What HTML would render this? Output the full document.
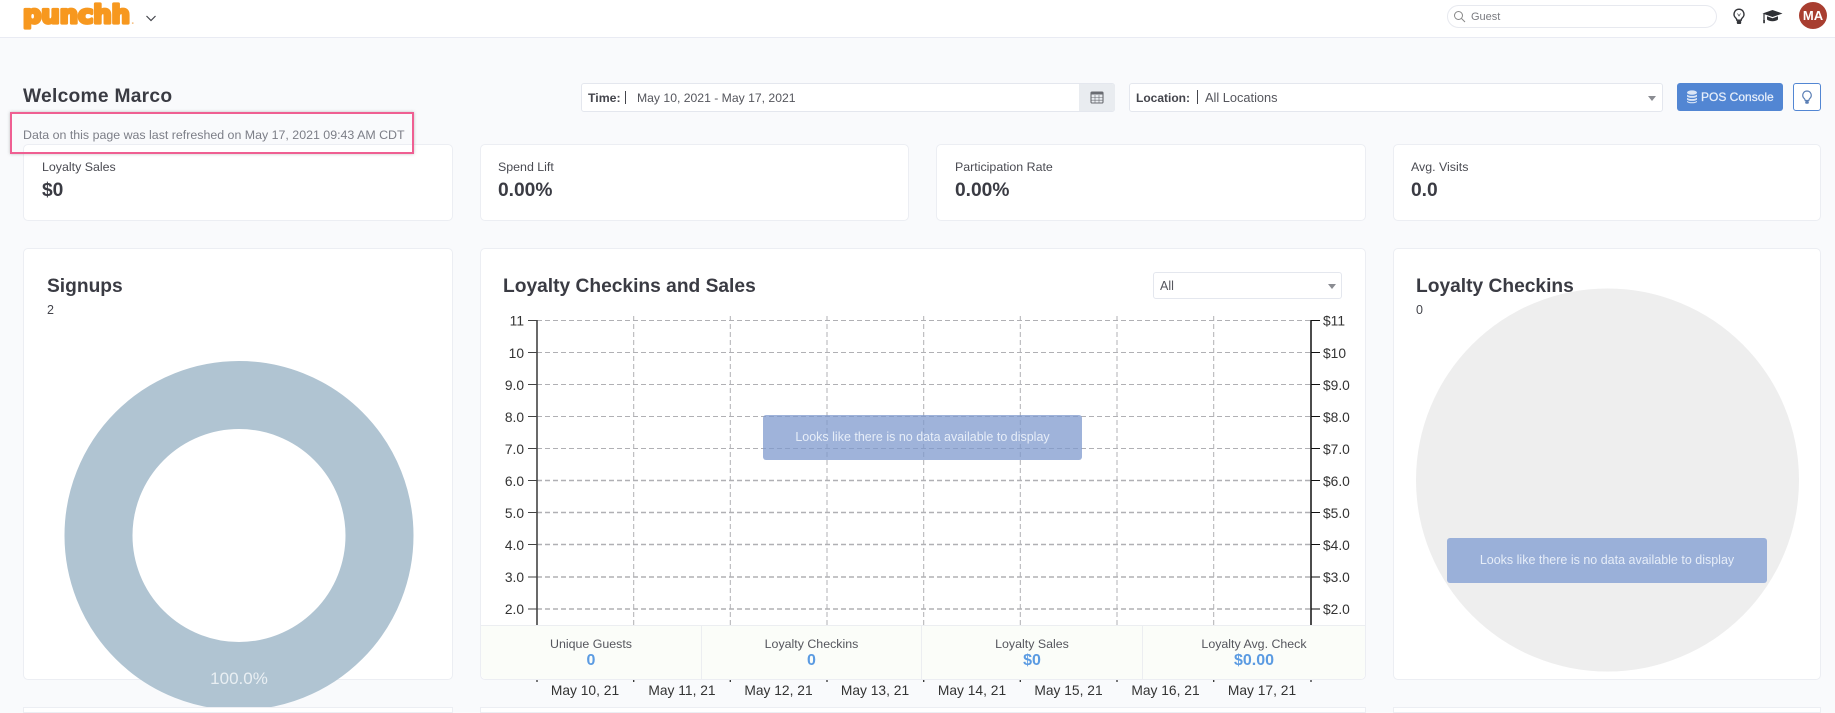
<!DOCTYPE html>
<html lang="en">
<head>
<meta charset="utf-8">
<title>Punchh Dashboard</title>
<style>
*{box-sizing:border-box}
html,body{margin:0;padding:0}
body{width:1835px;height:708px;overflow:hidden;background:#f9fafc;position:relative;font-family:"Liberation Sans",sans-serif;color:#3b3c44}
.a{position:absolute;white-space:nowrap}
.card{position:absolute;background:#fff;border:1px solid #eceef3;border-radius:5px}
.lbl{font-size:12.4px;color:#4a4b52;line-height:16px}
.val{font-size:19.2px;font-weight:700;color:#3a3b43;line-height:24px}
.title{font-size:19.2px;font-weight:700;color:#3a3b43;line-height:24px}
.box{position:absolute;background:#fff;border:1px solid #e4e7ee;border-radius:3px}
.tri{position:absolute;width:0;height:0;border-left:4px solid transparent;border-right:4px solid transparent;border-top:5px solid #8a8c92}
.nodata{position:absolute;border-radius:3px;color:#e6edf8;font-size:12.5px;text-align:center}
.cell{position:absolute;top:0;height:54px;text-align:center}
.cell .t{position:absolute;left:0;right:0;top:10px;font-size:12.4px;line-height:16px;color:#55565d}
.cell .v{position:absolute;left:0;right:0;top:25px;font-size:16px;line-height:20px;font-weight:700;color:#5b9be2}
</style>
</head>
<body>
<!-- header -->
<div class="a" style="left:0;top:0;width:1835px;height:38px;background:#fff;border-bottom:1px solid #e9ebf3"></div>
<svg class="a" style="left:18px;top:0" width="125" height="34" viewBox="0 0 125 34">
  <text x="5" y="23" font-family="DejaVu Sans" font-weight="700" font-size="25" fill="#f7981f" stroke="#f7981f" stroke-width="3.200" stroke-linejoin="round" textLength="107" lengthAdjust="spacingAndGlyphs">punchh</text>
  <text x="113" y="24" font-family="DejaVu Sans" font-weight="700" font-size="9" fill="#f5c48c">.</text>
</svg>
<svg class="a" style="left:145px;top:14px" width="12" height="9" viewBox="0 0 12 9"><path d="M1.500 2 L6 6.500 L10.500 2" fill="none" stroke="#44464c" stroke-width="1.200"/></svg>

<div class="a" style="left:1447px;top:5px;width:270px;height:23px;border:1px solid #e7e9ef;border-radius:12px;background:#fff"></div>
<svg class="a" style="left:1453px;top:10px" width="13" height="13" viewBox="0 0 13 13"><circle cx="5.500" cy="5.500" r="4" fill="none" stroke="#888" stroke-width="1"/><path d="M8.500 8.500 L12 12" stroke="#888" stroke-width="1"/></svg>
<div class="a" style="left:1471px;top:10px;font-size:11px;line-height:14px;color:#7a7b80">Guest</div>
<svg class="a" style="left:1732px;top:8px" width="14" height="17" viewBox="0 0 14 17"><path d="M7 1.200a5 5 0 0 0-3.200 8.800c.7.7 1 1.400 1 2.200h4.400c0-.8.300-1.500 1-2.200A5 5 0 0 0 7 1.200z" fill="#fff" stroke="#33353a" stroke-width="1.400"/><rect x="4.800" y="12.600" width="4.400" height="3.400" rx="1" fill="#33353a"/><path d="M5.500 5.500 L7 8 L8.500 5.500" fill="none" stroke="#33353a" stroke-width=".7"/></svg>
<svg class="a" style="left:1762px;top:9px" width="21" height="15" viewBox="0 0 21 15"><path d="M10.500 1 L20.500 4.500 L10.500 8 L.5 4.500z" fill="#2e3035"/><path d="M5 7.300 L10.500 9.300 L16 7.300 V10.500 C14 12.800 7 12.800 5 10.500z" fill="#2e3035"/><path d="M2 5 V11.500" stroke="#2e3035" stroke-width="1.200"/><rect x="1.200" y="11" width="1.700" height="3.200" fill="#2e3035"/></svg>
<div class="a" style="left:1799px;top:2px;width:28px;height:27px;border-radius:50%;background:#a83e30;color:#fff;font-weight:700;font-size:13px;line-height:27px;text-align:center">MA</div>

<!-- page heading -->
<div class="a" style="left:23px;top:85px;font-size:19.200px;font-weight:700;line-height:24px;color:#3a3b43;letter-spacing:.28px">Welcome Marco</div>

<!-- stat cards -->
<div class="card" style="left:23px;top:144px;width:430px;height:77px"></div>
<div class="card" style="left:480px;top:144px;width:429px;height:77px"></div>
<div class="card" style="left:936px;top:144px;width:430px;height:77px"></div>
<div class="card" style="left:1393px;top:144px;width:428px;height:77px"></div>
<div class="a lbl" style="left:42px;top:159px">Loyalty Sales</div>
<div class="a val" style="left:42px;top:179px">$0</div>
<div class="a lbl" style="left:498px;top:159px">Spend Lift</div>
<div class="a val" style="left:498px;top:179px">0.00%</div>
<div class="a lbl" style="left:955px;top:159px">Participation Rate</div>
<div class="a val" style="left:955px;top:179px">0.00%</div>
<div class="a lbl" style="left:1411px;top:159px">Avg. Visits</div>
<div class="a val" style="left:1411px;top:179px">0.0</div>

<!-- highlighted refresh box -->
<div class="a" style="left:10px;top:112px;width:404px;height:42px;border:2px solid #ef5f92;box-shadow:0 0 3px rgba(120,120,120,.45)"></div>
<div class="a" style="left:23px;top:127px;font-size:12.400px;line-height:16px;color:#7c7e87">Data on this page was last refreshed on May 17, 2021 09:43 AM CDT</div>

<!-- time -->
<div class="box" style="left:581px;top:83px;width:534px;height:29px"></div>
<div class="a" style="left:1079px;top:84px;width:36px;height:27px;background:#e9ecf0;border-radius:0 3px 3px 0"></div>
<svg class="a" style="left:1090px;top:90px" width="14" height="14" viewBox="0 0 14 14"><rect x="1" y="2" width="12" height="11" rx="1" fill="none" stroke="#6a6c72" stroke-width="1.100"/><rect x="1" y="2" width="12" height="2.500" fill="#6a6c72"/><path d="M1 7.500H13M1 10.200H13M5 5V13M9 5V13" stroke="#6a6c72" stroke-width=".6"/></svg>
<div class="a" style="left:588px;top:90px;font-size:12.300px;font-weight:700;line-height:16px;color:#44454c">Time:</div>
<div class="a" style="left:625px;top:91px;width:1px;height:13px;background:#44454c"></div>
<div class="a" style="left:637px;top:90px;font-size:12.200px;line-height:16px;color:#55565d">May 10, 2021 - May 17, 2021</div>

<!-- location -->
<div class="box" style="left:1129px;top:83px;width:534px;height:29px"></div>
<div class="a" style="left:1136px;top:90px;font-size:12px;font-weight:700;line-height:16px;color:#44454c">Location:</div>
<div class="a" style="left:1197px;top:90px;width:1px;height:14px;background:#44454c"></div>
<div class="a" style="left:1205px;top:90px;font-size:12.800px;line-height:16px;color:#55565d">All Locations</div>
<div class="tri" style="left:1648px;top:96px"></div>

<!-- POS -->
<div class="a" style="left:1677px;top:83px;width:106px;height:28px;background:#5286d3;border-radius:3px"></div>
<svg class="a" style="left:1686px;top:90px" width="12" height="14" viewBox="0 0 12 14" fill="#dbe6f6"><ellipse cx="6" cy="2.600" rx="5" ry="2.200"/><path d="M1 4.600c1.500 1.700 8.500 1.700 10 0V6.500C9.500 8.200 2.500 8.200 1 6.500z"/><path d="M1 7.800c1.500 1.700 8.500 1.700 10 0V9.600C9.500 11.300 2.500 11.300 1 9.600z"/><path d="M1 10.900c1.500 1.700 8.500 1.700 10 0V12c-1.500 1.700-8.500 1.700-10 0z"/></svg>
<div class="a" style="left:1701px;top:89px;font-size:12px;line-height:16px;color:#e6eefa;-webkit-text-stroke:.25px #e6eefa">POS Console</div>
<div class="a" style="left:1793px;top:83px;width:28px;height:28px;border:1px solid #5286d3;border-radius:3px;background:#fff"></div>
<svg class="a" style="left:1801px;top:90px" width="12" height="15" viewBox="0 0 12 15"><path d="M6 1a4.300 4.300 0 0 0-2.700 7.600c.6.6.9 1.200.9 1.900h3.600c0-.7.300-1.300.9-1.900A4.300 4.300 0 0 0 6 1z" fill="#fff" stroke="#5b7fb5" stroke-width="1.200"/><rect x="4.200" y="11" width="3.600" height="2.800" rx="1" fill="#5b7fb5"/></svg>

<!-- big cards -->
<div class="card" style="left:23px;top:248px;width:430px;height:432px"></div>
<div class="card" style="left:480px;top:248px;width:886px;height:432px"></div>
<div class="card" style="left:1393px;top:248px;width:428px;height:432px"></div>

<!-- signups -->
<div class="a title" style="left:47px;top:275px">Signups</div>
<div class="a" style="left:47px;top:302px;font-size:12.500px;line-height:16px;color:#44454c">2</div>
<svg class="a" style="left:0;top:340px" width="480" height="368" viewBox="0 340 480 368">
  <circle cx="239" cy="535.500" r="140.500" fill="none" stroke="#b0c4d2" stroke-width="68"/>
  <text x="239" y="684" text-anchor="middle" font-family="Liberation Sans" font-size="17" fill="#e9eff3">100.0%</text>
</svg>

<!-- Loyalty chart -->
<div class="a title" style="left:503px;top:275px">Loyalty Checkins and Sales</div>
<div class="box" style="left:1153px;top:272px;width:189px;height:27px;border-radius:3px"></div>
<div class="a" style="left:1160px;top:278px;font-size:12.500px;line-height:16px;color:#55565d">All</div>
<div class="tri" style="left:1328px;top:284px"></div>

<svg class="a" style="left:480px;top:300px" width="886" height="408" viewBox="480 300 886 408" font-family="Liberation Sans" font-size="13.800" fill="#333">
  <g stroke="#b0b0b4" stroke-width="1" stroke-dasharray="5 3" fill="none">
    <path d="M537 320.500H1311M537 352.500H1311M537 384.500H1311M537 416.500H1311M537 448.500H1311"/>
    <path d="M537 480.500H1311M537 512.500H1311M537 544.500H1311M537 577H1311M537 609H1311" stroke-width="1.400"/>
    <path d="M633.700 316V625M730.300 316V625M827 316V625M923.700 316V625M1020.300 316V625M1117 316V625M1213.700 316V625"/>
  </g>
  <g stroke="#444" stroke-width="1.600" fill="none">
    <path d="M537 320V625"/>
  </g>
  <g stroke="#444" stroke-width="1.100" fill="none">
    <path d="M528 320.500H537M528 352.500H537M528 384.500H537M528 416.500H537M528 448.500H537M528 480.500H537M528 512.500H537M528 544.500H537M528 577H537M528 609H537"/>
  </g>
  <g stroke="#111" stroke-width="1.500" fill="none">
    <path d="M1311 320V625"/>
  </g>
  <g stroke="#111" stroke-width="1.100" fill="none">
    <path d="M1311 320.500H1320M1311 352.500H1320M1311 384.500H1320M1311 416.500H1320M1311 448.500H1320M1311 480.500H1320M1311 512.500H1320M1311 544.500H1320M1311 577H1320M1311 609H1320"/>
  </g>
  <g text-anchor="end">
    <text x="524" y="325.500">11</text><text x="524" y="358">10</text><text x="524" y="390">9.0</text><text x="524" y="422">8.0</text><text x="524" y="454">7.0</text><text x="524" y="486">6.0</text><text x="524" y="518">5.0</text><text x="524" y="550">4.0</text><text x="524" y="582">3.0</text><text x="524" y="614">2.0</text>
  </g>
  <g>
    <text x="1323" y="325.500">$11</text><text x="1323" y="358">$10</text><text x="1323" y="390">$9.0</text><text x="1323" y="422">$8.0</text><text x="1323" y="454">$7.0</text><text x="1323" y="486">$6.0</text><text x="1323" y="518">$5.0</text><text x="1323" y="550">$4.0</text><text x="1323" y="582">$3.0</text><text x="1323" y="614">$2.0</text>
  </g>
  <g stroke="#333" stroke-width="1.300">
    <path d="M537 680V682M633.700 680V682M730.300 680V682M827 680V682M923.700 680V682M1020.300 680V682M1117 680V682M1213.700 680V682M1311 680V682"/>
  </g>
  <g text-anchor="middle">
    <text x="585" y="695">May 10, 21</text><text x="682" y="695">May 11, 21</text><text x="778.500" y="695">May 12, 21</text><text x="875" y="695">May 13, 21</text><text x="972" y="695">May 14, 21</text><text x="1068.500" y="695">May 15, 21</text><text x="1165.500" y="695">May 16, 21</text><text x="1262" y="695">May 17, 21</text>
  </g>
</svg>
<div class="nodata" style="left:763px;top:415px;width:319px;height:45px;line-height:45px;background:rgba(125,153,205,.74)">Looks like there is no data available to display</div>

<div class="a" style="left:481px;top:625px;width:884px;height:54px;background:#fbfdf9;border-top:1px solid #eceef1;border-radius:0 0 5px 5px">
  <div class="cell" style="left:0;width:221px;border-right:1px solid #eceef1"><div class="t">Unique Guests</div><div class="v">0</div></div>
  <div class="cell" style="left:221px;width:220px;border-right:1px solid #eceef1"><div class="t">Loyalty Checkins</div><div class="v">0</div></div>
  <div class="cell" style="left:441px;width:221px;border-right:1px solid #eceef1"><div class="t">Loyalty Sales</div><div class="v">$0</div></div>
  <div class="cell" style="left:662px;width:222px"><div class="t">Loyalty Avg. Check</div><div class="v">$0.00</div></div>
</div>

<!-- loyalty checkins -->
<svg class="a" style="left:1410px;top:285px" width="400" height="390" viewBox="1410 285 400 390"><circle cx="1607.500" cy="480" r="191.500" fill="#eeeeee"/></svg>
<div class="a title" style="left:1416px;top:275px">Loyalty Checkins</div>
<div class="a" style="left:1416px;top:302px;font-size:12.500px;line-height:16px;color:#44454c">0</div>
<div class="nodata" style="left:1447px;top:538px;width:320px;height:45px;line-height:45px;background:#9ab0d9">Looks like there is no data available to display</div>

<!-- next row peek -->
<div class="a" style="left:23px;top:707px;width:430px;height:6px;background:#fff;border:1px solid #eceef3"></div>
<div class="a" style="left:480px;top:707px;width:886px;height:6px;background:#fff;border:1px solid #eceef3"></div>
<div class="a" style="left:1393px;top:707px;width:428px;height:6px;background:#fff;border:1px solid #eceef3"></div>
</body>
</html>
